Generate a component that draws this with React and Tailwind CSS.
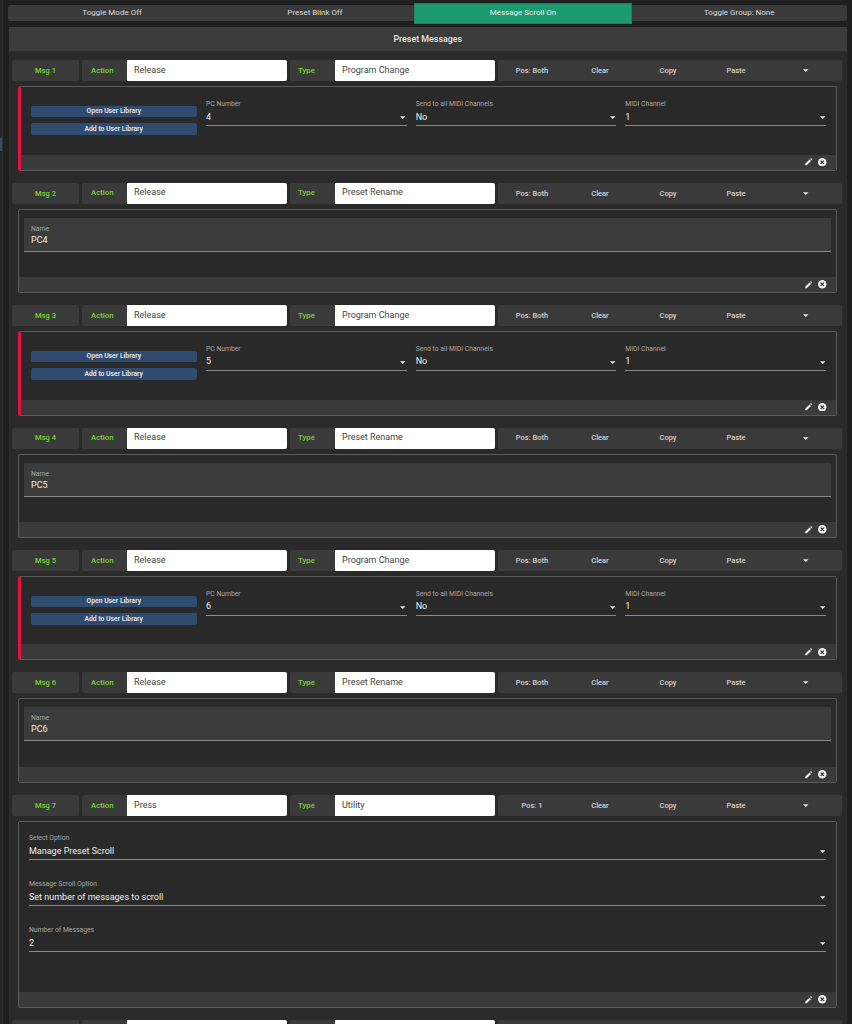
import React from 'react';

const Caret = () => (
  <svg width="5.500" height="3" viewBox="0 0 6 3" className="shrink-0"><path d="M0 0h6L3 3z" fill="#e4e4e4" /></svg>
);

const Pencil = () => (
  <svg width="9.500" height="9.500" viewBox="0 0 24 24" fill="#eeeeee"><path d="M3 17.250V21h3.750L17.810 9.940l-3.750-3.750L3 17.250zM20.710 7.040a1 1 0 0 0 0-1.410l-2.340-2.340a1 1 0 0 0-1.410 0l-1.830 1.830 3.750 3.750 1.830-1.830z" /></svg>
);

const CloseCircle = () => (
  <svg width="8.500" height="8.500" viewBox="0 0 24 24"><circle cx="12" cy="12" r="12" fill="#eeeeee" /><path d="M7.500 7.500l9 9M16.500 7.500l-9 9" stroke="#333333" strokeWidth="3.500" /></svg>
);

const Select = ({ label, value }) => (
  <div className="flex flex-col">
    <span className="text-[6.800px] leading-[10px] text-[#a8a8a8]">{label}</span>
    <div className="mt-[2px] flex h-[13px] items-center justify-between pr-[1px] text-[9px] text-[#eeeeee]">
      <span>{value}</span>
      <Caret />
    </div>
    <div className="mt-[1px] h-px bg-[#8a8a8a]" />
  </div>
);

const Footer = () => (
  <div className="flex h-[15px] items-center justify-end gap-[4.500px] bg-[#3a3a3a] pr-[9.500px]">
    <Pencil />
    <CloseCircle />
  </div>
);

const MessageHead = ({ n, action, type, pos, blank }) => (
  <div className="flex h-[21px] gap-[3px] text-[7.500px] font-medium">
    <div className="flex w-[67px] items-center justify-center rounded-[2px] bg-[#3a3a3a] text-[#76d72e]">{!blank && `Msg ${n}`}</div>
    <div className="flex w-[45px] items-center rounded-l-[2px] bg-[#3a3a3a] pl-[9px] text-[7.800px] text-[#76d72e]">{!blank && 'Action'}</div>
    <div className="-ml-[3px] flex w-[160px] items-center rounded-r-[2px] bg-white pl-[7px] text-[9px] font-normal text-[#444444]">{action}</div>
    <div className="flex w-[45px] items-center rounded-l-[2px] bg-[#3a3a3a] pl-[8px] text-[7.800px] text-[#76d72e]">{!blank && 'Type'}</div>
    <div className="-ml-[3px] flex w-[160px] items-center rounded-r-[2px] bg-white pl-[7px] text-[9px] font-normal text-[#444444]">{type}</div>
    <div className="grid w-[344px] grid-cols-[68px_68px_68px_68px_72px] rounded-[2px] bg-[#3a3a3a] text-[#d0d0d0]">
      {!blank && (
        <>
          <div className="flex items-center justify-center">{pos}</div>
          <div className="flex items-center justify-center">Clear</div>
          <div className="flex items-center justify-center">Copy</div>
          <div className="flex items-center justify-center">Paste</div>
          <div className="flex items-center justify-center"><Caret /></div>
        </>
      )}
    </div>
  </div>
);

const ProgramCard = ({ pc }) => (
  <div className="ml-[5.500px] flex h-[84.450px] w-[819.500px] flex-col overflow-hidden rounded-[2px] border border-[#5a5a5a] border-l-[3.500px] border-l-[#e3123f] bg-[#292929]">
    <div className="flex flex-1 gap-[9.500px] pl-[10.500px] pr-[10px] pt-[11.500px]">
      <div className="flex w-[165.500px] flex-col gap-[6px] pt-[7px]">
        <div className="flex h-[11.500px] items-center justify-center rounded-[2px] bg-[#2f4c70] text-[6.800px] font-semibold text-[#e8e8e8]">Open User Library</div>
        <div className="flex h-[11.500px] items-center justify-center rounded-[2px] bg-[#2f4c70] text-[6.800px] font-semibold text-[#e8e8e8]">Add to User Library</div>
      </div>
      <div className="grid flex-1 grid-cols-3 gap-[9px]">
        <Select label="PC Number" value={pc} />
        <Select label="Send to all MIDI Channels" value="No" />
        <Select label="MIDI Channel" value="1" />
      </div>
    </div>
    <Footer />
  </div>
);

const RenameCard = ({ name }) => (
  <div className="ml-[5.500px] flex h-[84.450px] w-[819.500px] flex-col overflow-hidden rounded-[2px] border border-[#5a5a5a] bg-[#292929]">
    <div className="flex-1 px-[5.500px] pt-[8px]">
      <div className="h-[34px] border-b-[1.500px] border-[#8a8a8a] bg-[#3b3b3b] pl-[7px] pt-[6px]">
        <div className="text-[6.800px] leading-[10px] text-[#a8a8a8]">Name</div>
        <div className="text-[9px] leading-[12px] text-[#eeeeee]">{name}</div>
      </div>
    </div>
    <Footer />
  </div>
);

const UtilityCard = () => (
  <div className="ml-[5.500px] flex h-[187px] w-[819.500px] flex-col overflow-hidden rounded-[2px] border border-[#5a5a5a] bg-[#292929]">
    <div className="flex flex-1 flex-col gap-[19px] pl-[10.500px] pr-[10px] pt-[11.500px]">
      <Select label="Select Option" value="Manage Preset Scroll" />
      <Select label="Message Scroll Option" value="Set number of messages to scroll" />
      <Select label="Number of Messages" value="2" />
    </div>
    <Footer />
  </div>
);

const messages = [
  { n: 1, action: 'Release', type: 'Program Change', pos: 'Pos: Both', pc: '4' },
  { n: 2, action: 'Release', type: 'Preset Rename', pos: 'Pos: Both', name: 'PC4' },
  { n: 3, action: 'Release', type: 'Program Change', pos: 'Pos: Both', pc: '5' },
  { n: 4, action: 'Release', type: 'Preset Rename', pos: 'Pos: Both', name: 'PC5' },
  { n: 5, action: 'Release', type: 'Program Change', pos: 'Pos: Both', pc: '6' },
  { n: 6, action: 'Release', type: 'Preset Rename', pos: 'Pos: Both', name: 'PC6' },
  { n: 7, action: 'Press', type: 'Utility', pos: 'Pos: 1', utility: true },
];

export default function App() {
  return (
    <div className="flex h-[1024px] w-[852px] overflow-hidden bg-[#1f1f1f] font-['Roboto',sans-serif] antialiased">
      {/* sliver of the sidebar, mostly scrolled off to the left */}
      <div className="w-[3px] shrink-0 border-r border-[#333333] bg-[#262626] pt-[138px]">
        <div className="h-[13px] w-[2px] bg-[#2f4c70]" />
      </div>
      <div className="min-w-0 flex-1">
        <div className="flex h-[26px] items-center pl-[5px] pr-[5.500px] text-[8px] text-[#dddddd]">
          <div className="flex h-[16.500px] w-[406px] rounded-l-[2px] bg-[#3a3a3a]">
            <div className="flex w-[208px] items-center justify-center">Toggle Mode Off</div>
            <div className="flex flex-1 items-center justify-center">Preset Blink Off</div>
          </div>
          <div className="flex h-[21px] w-[218px] items-center justify-center border border-[#2c7a5f] bg-[#1c9a70] text-[#e4f2ec]">Message Scroll On</div>
          <div className="flex h-[16.500px] flex-1 items-center justify-center rounded-r-[2px] bg-[#3a3a3a]">Toggle Group: None</div>
        </div>
        <div className="ml-[6px] mr-[5.500px] mt-[1px] h-full bg-[#2a2a2a]">
          <div className="flex h-[24px] items-center justify-center bg-[#3b3b3b] pt-[2px] text-[8.900px] font-medium text-[#e4e4e4]">Preset Messages</div>
          <div className="flex flex-col gap-[12px] pl-[3px] pt-[9.250px]">
            {messages.map((m) => (
              <div key={m.n} className="flex flex-col gap-[5px]">
                <MessageHead {...m} />
                {m.pc && <ProgramCard pc={m.pc} />}
                {m.name && <RenameCard name={m.name} />}
                {m.utility && <UtilityCard />}
              </div>
            ))}
            <MessageHead blank />
          </div>
        </div>
      </div>
    </div>
  );
}
